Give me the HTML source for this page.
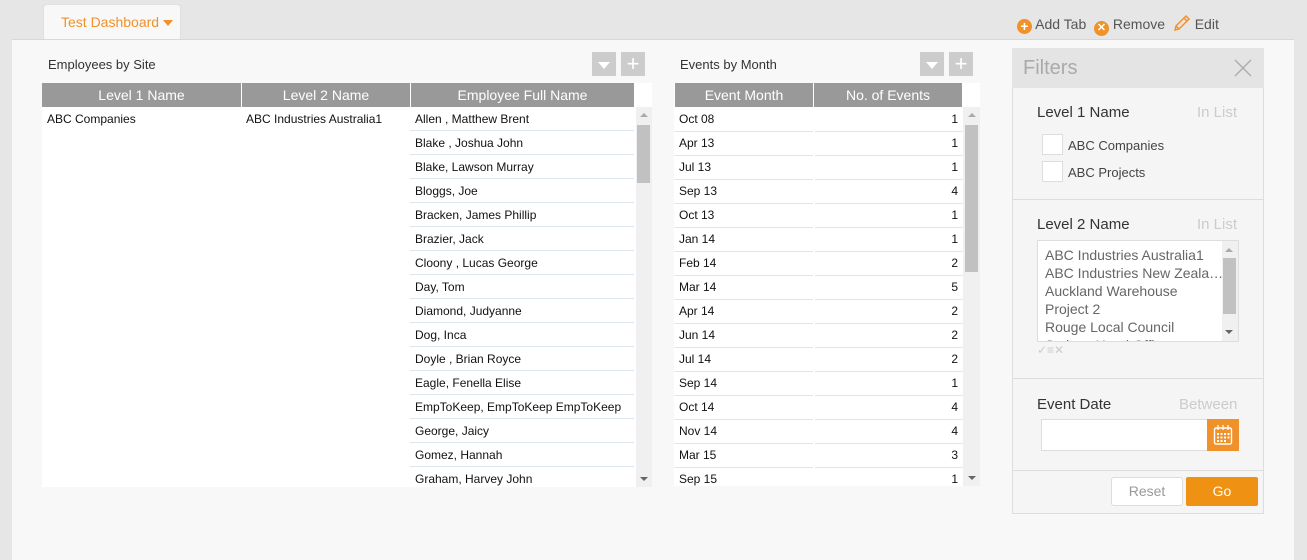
<!DOCTYPE html>
<html><head><style>
*{margin:0;padding:0;box-sizing:border-box}
body{width:1307px;height:560px;background:#e6e6e6;font-family:"Liberation Sans",Arial,sans-serif;position:relative;overflow:hidden;font-size:12px;color:#111}
.abs{position:absolute}
.main{left:12px;top:39px;width:1282px;height:521px;background:#f8f8f8;border-top:1px solid #d8d8d8}
.tab{left:43px;top:4px;width:138px;height:37px;background:#f8f8f8;border-radius:4px 4px 0 0;border:1px solid #e0e0e0;border-bottom:none;color:#f0912a;font-size:14px;padding:9px 0 0 17px}
.title{font-size:13px;color:#333}
.btn{width:24px;height:24px;background:#ccc;color:#fff;text-align:center;font-size:22px;line-height:23px}
.hdr{background:#999;color:#fff;font-size:14px;text-align:center;line-height:24px;height:24px;top:83px}
.cell{height:24px;line-height:24px;padding-left:5px;border-bottom:1px solid #dde6ee;background:#fff;white-space:nowrap;overflow:hidden}
.sb{background:#f0f0f0}
.thumb{background:#c1c1c1}
.fl{font-size:15px;color:#333}
.gr{font-size:15px;color:#ccc}
</style></head><body>
<div class="abs tab">Test Dashboard <span style="display:inline-block;width:0;height:0;border-left:5px solid transparent;border-right:5px solid transparent;border-top:6px solid #f0912a;vertical-align:middle"></span></div>
<div class="abs main"></div>
<div class="abs" style="left:1017px;top:14px;font-size:14px;color:#555;white-space:nowrap">
<span style="display:inline-block;width:15px;height:15px;border-radius:50%;background:#f0912a;color:#fff;text-align:center;line-height:15px;font-weight:bold;font-size:14px;vertical-align:-2px">+</span> Add Tab&nbsp;
<span style="display:inline-block;width:15px;height:15px;border-radius:50%;background:#f0912a;color:#fff;text-align:center;line-height:15px;font-weight:bold;font-size:11px;vertical-align:-2px">✕</span> Remove&nbsp;
<svg width="18" height="18" viewBox="0 0 18 18" style="vertical-align:-3px"><path d="M2 16 L3 12 L13 2 L16 5 L6 15 Z M3 12 L6 15 M11 4 L14 7" fill="none" stroke="#f0912a" stroke-width="1.5"/></svg> Edit</div>

<!-- table 1 -->
<div class="abs title" style="left:48px;top:57px">Employees by Site</div>
<div class="abs btn" style="left:592px;top:52px"><span style="display:inline-block;border-left:6px solid transparent;border-right:6px solid transparent;border-top:7px solid #fff;vertical-align:middle"></span></div>
<div class="abs btn" style="left:621px;top:52px">+</div>
<div class="abs" style="left:42px;top:83px;width:610px;height:404px;background:#fff"></div>
<div class="abs hdr" style="left:42px;width:199px">Level 1 Name</div>
<div class="abs hdr" style="left:242px;width:168px">Level 2 Name</div>
<div class="abs hdr" style="left:411px;width:223px">Employee Full Name</div>
<div class="abs" style="left:47px;top:107px;line-height:24px">ABC Companies</div>
<div class="abs" style="left:246px;top:107px;line-height:24px">ABC Industries Australia1</div>
<div class="abs" style="left:410px;top:107px;width:224px;height:380px;overflow:hidden">
<div class="cell">Allen , Matthew Brent</div><div class="cell">Blake , Joshua John</div><div class="cell">Blake, Lawson Murray</div><div class="cell">Bloggs, Joe</div><div class="cell">Bracken, James Phillip</div><div class="cell">Brazier, Jack</div><div class="cell">Cloony , Lucas George</div><div class="cell">Day, Tom</div><div class="cell">Diamond, Judyanne</div><div class="cell">Dog, Inca</div><div class="cell">Doyle , Brian Royce</div><div class="cell">Eagle, Fenella Elise</div><div class="cell">EmpToKeep, EmpToKeep EmpToKeep</div><div class="cell">George, Jaicy</div><div class="cell">Gomez, Hannah</div><div class="cell">Graham, Harvey John</div>
</div>
<div class="abs sb" style="left:636px;top:107px;width:16px;height:380px"></div>
<div class="abs thumb" style="left:637px;top:125px;width:13px;height:58px"></div>
<div class="abs" style="left:640px;top:113px;border-left:4px solid transparent;border-right:4px solid transparent;border-bottom:4px solid #aaa"></div>
<div class="abs" style="left:640px;top:477px;border-left:4px solid transparent;border-right:4px solid transparent;border-top:4px solid #666"></div>

<!-- table 2 -->
<div class="abs title" style="left:680px;top:57px">Events by Month</div>
<div class="abs btn" style="left:920px;top:52px"><span style="display:inline-block;border-left:6px solid transparent;border-right:6px solid transparent;border-top:7px solid #fff;vertical-align:middle"></span></div>
<div class="abs btn" style="left:949px;top:52px">+</div>
<div class="abs" style="left:674px;top:83px;width:306px;height:403px;background:#fff"></div>
<div class="abs hdr" style="left:675px;width:138px">Event Month</div>
<div class="abs hdr" style="left:814px;width:148px">No. of Events</div>
<div class="abs" style="left:674px;top:107px;width:289px;height:379px;overflow:hidden">
<table style="border-collapse:collapse;width:289px">
<tbody>
<tr><td>Oct 08</td><td>1</td></tr><tr><td>Apr 13</td><td>1</td></tr><tr><td>Jul 13</td><td>1</td></tr><tr><td>Sep 13</td><td>4</td></tr><tr><td>Oct 13</td><td>1</td></tr><tr><td>Jan 14</td><td>1</td></tr><tr><td>Feb 14</td><td>2</td></tr><tr><td>Mar 14</td><td>5</td></tr><tr><td>Apr 14</td><td>2</td></tr><tr><td>Jun 14</td><td>2</td></tr><tr><td>Jul 14</td><td>2</td></tr><tr><td>Sep 14</td><td>1</td></tr><tr><td>Oct 14</td><td>4</td></tr><tr><td>Nov 14</td><td>4</td></tr><tr><td>Mar 15</td><td>3</td></tr><tr><td>Sep 15</td><td>1</td></tr>
</tbody></table>
<style>
td{height:24px;padding:0 5px;border-bottom:1px solid #dde6ee;font-size:12px}
td:first-child{width:140px;border-right:2px solid #fff}
td:last-child{text-align:right}
</style>
</div>
<div class="abs sb" style="left:963px;top:107px;width:17px;height:379px"></div>
<div class="abs thumb" style="left:965px;top:125px;width:13px;height:147px"></div>
<div class="abs" style="left:968px;top:113px;border-left:4px solid transparent;border-right:4px solid transparent;border-bottom:4px solid #aaa"></div>
<div class="abs" style="left:968px;top:476px;border-left:4px solid transparent;border-right:4px solid transparent;border-top:4px solid #666"></div>

<!-- filters -->
<div class="abs" style="left:1012px;top:48px;width:252px;height:466px;background:#f5f5f5;border:1px solid #ddd"></div>
<div class="abs" style="left:1012px;top:48px;width:252px;height:40px;background:#e4e4e4"></div>
<div class="abs" style="left:1023px;top:57px;font-size:20px;color:#aaa">Filters</div>
<svg class="abs" style="left:1234px;top:59px" width="18" height="18"><path d="M1 1L17 17M17 1L1 17" stroke="#aaa" stroke-width="1.3"/></svg>
<div class="abs fl" style="left:1037px;top:104px">Level 1 Name</div>
<div class="abs gr" style="left:1197px;top:104px">In List</div>
<div class="abs" style="left:1042px;top:134px;width:21px;height:21px;background:#fff;border:1px solid #ddd"></div>
<div class="abs" style="left:1068px;top:138px;font-size:13px;color:#444">ABC Companies</div>
<div class="abs" style="left:1042px;top:161px;width:21px;height:21px;background:#fff;border:1px solid #ddd"></div>
<div class="abs" style="left:1068px;top:165px;font-size:13px;color:#444">ABC Projects</div>
<div class="abs" style="left:1013px;top:199px;width:250px;height:1px;background:#ddd"></div>
<div class="abs fl" style="left:1037px;top:216px">Level 2 Name</div>
<div class="abs gr" style="left:1197px;top:216px">In List</div>
<div class="abs" style="left:1037px;top:240px;width:202px;height:102px;background:#fff;border:1px solid #ddd;overflow:hidden;font-size:14px;color:#666;line-height:18px;padding:5px 0 0 7px;white-space:nowrap">ABC Industries Australia1<br>ABC Industries New Zeala…<br>Auckland Warehouse<br>Project 2<br>Rouge Local Council<br>Sydney Head Office</div>
<div class="abs" style="left:1222px;top:241px;width:16px;height:100px;background:#f0f0f0"></div>
<div class="abs thumb" style="left:1223px;top:258px;width:13px;height:56px"></div>
<div class="abs" style="left:1225px;top:248px;border-left:4px solid transparent;border-right:4px solid transparent;border-bottom:4px solid #aaa"></div>
<div class="abs" style="left:1225px;top:330px;border-left:4px solid transparent;border-right:4px solid transparent;border-top:4px solid #666"></div>
<div class="abs" style="left:1037px;top:343px;font-size:12px;color:#ccc">✓≡✕</div>
<div class="abs" style="left:1013px;top:378px;width:250px;height:1px;background:#ddd"></div>
<div class="abs fl" style="left:1037px;top:396px">Event Date</div>
<div class="abs gr" style="left:1179px;top:396px">Between</div>
<div class="abs" style="left:1041px;top:419px;width:167px;height:32px;background:#fff;border:1px solid #ddd"></div>
<div class="abs" style="left:1207px;top:419px;width:32px;height:32px;background:#f0912a"></div>
<svg class="abs" style="left:1213px;top:424px" width="20" height="22" viewBox="0 0 20 22"><rect x="1.5" y="4" width="17" height="16" rx="1.5" fill="none" stroke="#fff" stroke-width="1.4"/><path d="M5 1v5M10 1v5M15 1v5" stroke="#fff" stroke-width="1.3"/><g fill="#fff"><rect x="4" y="9" width="2" height="2"/><rect x="7.5" y="9" width="2" height="2"/><rect x="11" y="9" width="2" height="2"/><rect x="14.5" y="9" width="2" height="2"/><rect x="4" y="12.5" width="2" height="2"/><rect x="7.5" y="12.5" width="2" height="2"/><rect x="11" y="12.5" width="2" height="2"/><rect x="14.5" y="12.5" width="2" height="2"/><rect x="4" y="16" width="2" height="2"/><rect x="7.5" y="16" width="2" height="2"/><rect x="11" y="16" width="2" height="2"/></g></svg>
<div class="abs" style="left:1013px;top:470px;width:250px;height:1px;background:#ddd"></div>
<div class="abs" style="left:1111px;top:477px;width:72px;height:29px;background:#fff;border:1px solid #ddd;border-radius:3px;text-align:center;line-height:27px;font-size:14px;color:#999">Reset</div>
<div class="abs" style="left:1186px;top:477px;width:72px;height:29px;background:#ef9112;border-radius:2px;text-align:center;line-height:29px;font-size:14px;color:#fff">Go</div>
</body></html>
